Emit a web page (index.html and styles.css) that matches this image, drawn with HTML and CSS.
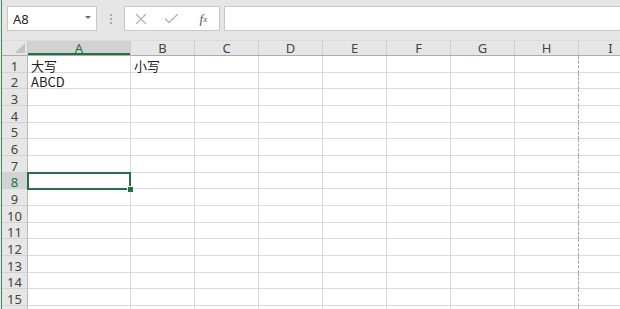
FILE: index.html
```html
<!DOCTYPE html>
<html lang="zh-CN">
<head>
  <meta charset="UTF-8">
  <title>Sheet1</title>
  <link rel="stylesheet" href="styles.css">
</head>
<body>
<div class="window">

  <div class="toolbar">
    <div class="namebox">
      <span class="ref">A8</span>
      <span class="drop"></span>
    </div>
    <div class="grip"><i></i><i></i><i></i></div>
    <div class="fxgroup">
      <span class="btn">
        <svg width="12" height="12" viewBox="0 0 12 12"><path d="M1 1 L11 11 M11 1 L1 11" stroke="#b3b3b3" stroke-width="1.2" fill="none"/></svg>
      </span>
      <span class="btn">
        <svg width="15" height="11" viewBox="0 0 15 11"><path d="M1 5.5 L5 9.5 L14 1" stroke="#b3b3b3" stroke-width="1.3" fill="none"/></svg>
      </span>
      <span class="btn fx">f<sub>x</sub></span>
    </div>
    <div class="formula"></div>
  </div>

  <div class="colhead">
    <div class="corner"><span class="tri"></span></div>
    <div class="ch active">A</div>
    <div class="ch">B</div>
    <div class="ch">C</div>
    <div class="ch">D</div>
    <div class="ch">E</div>
    <div class="ch">F</div>
    <div class="ch">G</div>
    <div class="ch">H</div>
    <div class="ch">I</div>
  </div>

  <div class="rows">
    <div class="rh">1</div><div class="c">大写</div><div class="c">小写</div><div class="c"></div><div class="c"></div><div class="c"></div><div class="c"></div><div class="c"></div><div class="c"></div><div class="c"></div>
    <div class="rh">2</div><div class="c">ABCD</div><div class="c"></div><div class="c"></div><div class="c"></div><div class="c"></div><div class="c"></div><div class="c"></div><div class="c"></div><div class="c"></div>
    <div class="rh">3</div><div class="c"></div><div class="c"></div><div class="c"></div><div class="c"></div><div class="c"></div><div class="c"></div><div class="c"></div><div class="c"></div><div class="c"></div>
    <div class="rh">4</div><div class="c"></div><div class="c"></div><div class="c"></div><div class="c"></div><div class="c"></div><div class="c"></div><div class="c"></div><div class="c"></div><div class="c"></div>
    <div class="rh">5</div><div class="c"></div><div class="c"></div><div class="c"></div><div class="c"></div><div class="c"></div><div class="c"></div><div class="c"></div><div class="c"></div><div class="c"></div>
    <div class="rh">6</div><div class="c"></div><div class="c"></div><div class="c"></div><div class="c"></div><div class="c"></div><div class="c"></div><div class="c"></div><div class="c"></div><div class="c"></div>
    <div class="rh">7</div><div class="c"></div><div class="c"></div><div class="c"></div><div class="c"></div><div class="c"></div><div class="c"></div><div class="c"></div><div class="c"></div><div class="c"></div>
    <div class="rh active">8</div><div class="c selected"><span class="sel"><span class="handle"></span></span></div><div class="c"></div><div class="c"></div><div class="c"></div><div class="c"></div><div class="c"></div><div class="c"></div><div class="c"></div><div class="c"></div>
    <div class="rh">9</div><div class="c"></div><div class="c"></div><div class="c"></div><div class="c"></div><div class="c"></div><div class="c"></div><div class="c"></div><div class="c"></div><div class="c"></div>
    <div class="rh">10</div><div class="c"></div><div class="c"></div><div class="c"></div><div class="c"></div><div class="c"></div><div class="c"></div><div class="c"></div><div class="c"></div><div class="c"></div>
    <div class="rh">11</div><div class="c"></div><div class="c"></div><div class="c"></div><div class="c"></div><div class="c"></div><div class="c"></div><div class="c"></div><div class="c"></div><div class="c"></div>
    <div class="rh">12</div><div class="c"></div><div class="c"></div><div class="c"></div><div class="c"></div><div class="c"></div><div class="c"></div><div class="c"></div><div class="c"></div><div class="c"></div>
    <div class="rh">13</div><div class="c"></div><div class="c"></div><div class="c"></div><div class="c"></div><div class="c"></div><div class="c"></div><div class="c"></div><div class="c"></div><div class="c"></div>
    <div class="rh">14</div><div class="c"></div><div class="c"></div><div class="c"></div><div class="c"></div><div class="c"></div><div class="c"></div><div class="c"></div><div class="c"></div><div class="c"></div>
    <div class="rh">15</div><div class="c"></div><div class="c"></div><div class="c"></div><div class="c"></div><div class="c"></div><div class="c"></div><div class="c"></div><div class="c"></div><div class="c"></div>
    <div class="rh"></div><div class="c"></div><div class="c"></div><div class="c"></div><div class="c"></div><div class="c"></div><div class="c"></div><div class="c"></div><div class="c"></div><div class="c"></div>
  </div>

</div>
</body>
</html>
```

FILE: styles.css
```css
* {
  box-sizing: border-box;
}
html, body {
  margin: 0;
  height: 100%;
}
body {
  background: #e6e6e6;
  overflow: hidden;
  font-family: "Noto Sans", "Noto Sans CJK SC", sans-serif;
  color: #222;
}
.window {
  margin-left: 1px;
  border-left: 1px solid #3f8f60;
  height: 309px;
  overflow: hidden;
}

/* toolbar */
.toolbar {
  display: flex;
  align-items: stretch;
  height: 31px;
  padding: 6px 0 0 5px;
}
.namebox {
  width: 90px;
  background: #fff;
  border: 1px solid #c8c8c8;
  display: flex;
  align-items: center;
  justify-content: space-between;
  padding: 0 5px 0 5px;
}
.ref {
  font-size: 13px;
  color: #222;
}
.drop {
  width: 0;
  height: 0;
  border-left: 3px solid transparent;
  border-right: 3px solid transparent;
  border-top: 3px solid #6a6a6a;
  margin-top: -2px;
}
.grip {
  width: 27px;
  display: flex;
  flex-direction: column;
  align-items: center;
  justify-content: center;
  gap: 2px;
}
.grip i {
  width: 2px;
  height: 2px;
  background: #a9a9a9;
}
.fxgroup {
  width: 96px;
  background: #fff;
  border: 1px solid #c8c8c8;
  display: flex;
  align-items: center;
}
.btn {
  width: 32px;
  display: flex;
  justify-content: center;
  align-items: center;
}
.fx {
  font-family: "Liberation Serif", serif;
  font-style: italic;
  font-size: 13px;
  color: #555;
}
.fx sub {
  font-size: 9px;
  vertical-align: -1px;
}
.formula {
  flex: 1;
  margin-left: 4px;
  margin-right: -1px;
  background: #fff;
  border: 1px solid #c8c8c8;
}

/* column headers */
.colhead {
  margin-top: 9px;
  display: grid;
  grid-template-columns: 26px 103px repeat(8, 64px);
  height: 16px;
  border-top: 1px solid #dcdcdc;
}
.corner {
  border-right: 1px solid #c8c8c8;
  border-bottom: 1px solid #ababab;
  position: relative;
}
.tri {
  position: absolute;
  right: 2px;
  bottom: 2px;
  width: 0;
  height: 0;
  border-left: 10px solid transparent;
  border-bottom: 10px solid #c2c2c2;
}
.ch {
  font-size: 13px;
  line-height: 14px;
  text-align: center;
  color: #444;
  border-right: 1px solid #cdcdcd;
  border-bottom: 1px solid #ababab;
}
.ch.active {
  background: #d2d2d2;
  color: #217346;
  box-shadow: inset 0 -2px 0 #217346;
}

/* rows */
.rows {
  display: grid;
  grid-template-columns: 26px 103px repeat(8, 64px);
  grid-auto-rows: 16.667px;
}
.rh {
  font-size: 13px;
  line-height: 12px;
  text-align: center;
  color: #444;
  border-right: 1px solid #b9b9b9;
  border-bottom: 1px solid #d2d2d2;
  display: flex;
  align-items: flex-end;
  justify-content: center;
}
.rh.active {
  background: #d2d2d2;
  color: #217346;
}
.c {
  background: #fff;
  border-right: 1px solid #dadada;
  border-bottom: 1px solid #dadada;
  font-family: "Noto Sans CJK SC", sans-serif;
  font-size: 13px;
  line-height: 12px;
  padding-left: 3px;
  display: flex;
  align-items: flex-end;
  white-space: nowrap;
  color: #222;
}
.rows > .c:nth-child(10n+9) {
  border-right: 1px dashed #a3a3a3;
}
.selected {
  position: relative;
}
.sel {
  position: absolute;
  top: -1px;
  left: -1px;
  right: -1px;
  bottom: -2px;
  border: 2px solid #217346;
}
.handle {
  position: absolute;
  right: -5px;
  bottom: -5px;
  width: 7px;
  height: 7px;
  background: #217346;
  border: 1px solid #fff;
}
```
